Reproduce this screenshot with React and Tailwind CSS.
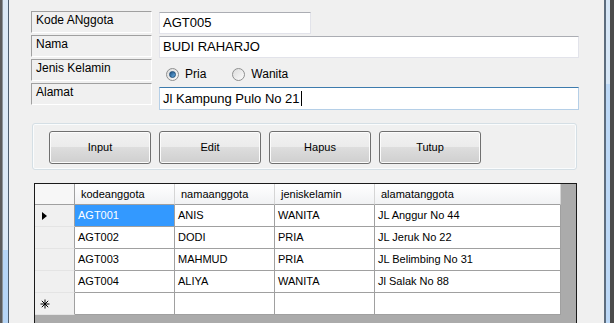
import React from "react";

const ROWS = [
  { kode: "AGT001", nama: "ANIS", jk: "WANITA", alamat: "JL Anggur No 44" },
  { kode: "AGT002", nama: "DODI", jk: "PRIA", alamat: "JL Jeruk No 22" },
  { kode: "AGT003", nama: "MAHMUD", jk: "PRIA", alamat: "JL Belimbing No 31" },
  { kode: "AGT004", nama: "ALIYA", jk: "WANITA", alamat: "Jl Salak No 88" },
];

const COLS = ["kodeanggota", "namaanggota", "jeniskelamin", "alamatanggota"];

function LabelBox({ children }) {
  return (
    <div className="w-[121px] h-[22px] shrink-0 border-t border-l border-b border-r border-t-[#a0a0a0] border-l-[#a0a0a0] border-b-white border-r-white pl-[4px] pt-[1px] text-[12px] leading-[14px] text-black">
      {children}
    </div>
  );
}

function TextBox({ value, width, focused, caret, className = "" }) {
  return (
    <div
      className={`ml-[7px] h-[22px] ${width} bg-white border flex items-center pl-[3px] text-[13px] text-black ${
        focused
          ? "border-[#b5cfe7] border-t-[#3d7bad]"
          : "border-[#e2e3ea] border-t-[#abadb3]"
      } ${className}`}
    >
      <span className="whitespace-pre">{value}</span>
      {caret && <span className="w-px h-[15px] bg-black ml-[1px]" />}
    </div>
  );
}

function Radio({ checked, label }) {
  return (
    <div className="flex items-center gap-[6px] text-[12px] text-black">
      <span className="w-[13px] h-[13px] rounded-full border border-[#8e8f8f] bg-gradient-to-br from-[#dcdcdc] to-[#fbfbfb] flex items-center justify-center">
        {checked && (
          <span className="w-[7px] h-[7px] rounded-full bg-gradient-to-br from-[#1a4f80] to-[#6bb0e6] border border-[#1e4e79]" />
        )}
      </span>
      <span>{label}</span>
    </div>
  );
}

function WinButton({ children }) {
  return (
    <button className="w-[102px] h-[33px] rounded-[3px] border border-[#707070] bg-[linear-gradient(#f2f2f2_0%,#ebebeb_50%,#dddddd_50%,#cfcfcf_100%)] shadow-[inset_0_0_0_1px_#fcfcfc] text-[11px] text-black">
      {children}
    </button>
  );
}

function Asterisk() {
  return (
    <svg width="10" height="10" viewBox="0 0 10 10" className="text-black">
      <g stroke="currentColor" strokeWidth="1">
        <line x1="5" y1="0.5" x2="5" y2="9.5" />
        <line x1="0.5" y1="5" x2="9.5" y2="5" />
        <line x1="1.8" y1="1.8" x2="8.2" y2="8.2" />
        <line x1="8.2" y1="1.8" x2="1.8" y2="8.2" />
      </g>
    </svg>
  );
}

function DataGrid() {
  const cell = "h-[22px] border-r border-b border-[#a0a0a0] flex items-center pl-[3px] text-[11px] bg-white text-black";
  const rowHead = "h-[22px] border-r border-b border-r-[#a0a0a0] border-b-[#e4e4e4] bg-[#f0f0f0] flex items-center";
  return (
    <div className="shrink-0 ml-[3px] mt-[13px] w-[543px] h-[160px] border border-[#1a1a1a] bg-[#ababab]">
      <div className="grid grid-cols-[40px_100px_100px_100px_186px] w-[526px]">
        <div className="h-[21px] border-r border-b border-r-[#a0a0a0] border-b-[#a0a0a0] bg-[#f7f7f7]" />
        {COLS.map((c) => (
          <div
            key={c}
            className="h-[21px] border-r border-b border-r-[#d5d5d5] border-b-[#a0a0a0] bg-[linear-gradient(#ffffff,#f1f2f4)] flex items-center pl-[6px] text-[11px] text-black"
          >
            {c}
          </div>
        ))}
        {ROWS.map((r, i) => (
          <React.Fragment key={r.kode}>
            <div className={rowHead}>
              {i === 0 && (
                <span className="ml-[7px] w-0 h-0 border-y-[4px] border-y-transparent border-l-[5px] border-l-black" />
              )}
            </div>
            <div className={`${cell} ${i === 0 ? "!bg-[#3399ff] !text-white" : ""}`}>{r.kode}</div>
            <div className={cell}>{r.nama}</div>
            <div className={cell}>{r.jk}</div>
            <div className={cell}>{r.alamat}</div>
          </React.Fragment>
        ))}
        <div className={rowHead}>
          <span className="ml-[5px] flex">
            <Asterisk />
          </span>
        </div>
        <div className={cell} />
        <div className={cell} />
        <div className={cell} />
        <div className={cell} />
      </div>
    </div>
  );
}

export default function App() {
  return (
    <div className="w-[614px] h-[323px] overflow-hidden flex bg-[#f0f0f0] font-['Liberation_Sans',Arial,sans-serif]">
      {/* left window frame */}
      <div className="w-[9px] shrink-0 flex">
        <div className="w-[2px] bg-[#5c5c5c]" />
        <div className="w-[1px] bg-[#8d949b]" />
        <div className="w-[5px] flex flex-col">
          <div className="h-[250px] bg-[#dbe8f5]" />
          <div className="flex-1 bg-[#b6d5f6]" />
        </div>
        <div className="w-[1px] bg-[#4d5d6e]" />
      </div>

      <main className="flex-1 flex flex-col pt-[11px] pl-[22px]">
        <div className="shrink-0 flex flex-col gap-[2px]">
          <div className="flex items-start h-[22px]">
            <LabelBox>Kode ANggota</LabelBox>
            <TextBox value="AGT005" width="w-[152px]" className="mt-[1px] h-[21px]" />
          </div>
          <div className="flex items-start h-[22px]">
            <LabelBox>Nama</LabelBox>
            <TextBox value="BUDI RAHARJO" width="w-[420px]" className="mt-[1px] h-[21px]" />
          </div>
          <div className="flex items-start h-[22px]">
            <LabelBox>Jenis Kelamin</LabelBox>
            <div className="ml-[14px] mt-[6px] flex items-center gap-[26px]">
              <Radio checked label="Pria" />
              <Radio label="Wanita" />
            </div>
          </div>
          <div className="flex items-start h-[22px]">
            <LabelBox>Alamat</LabelBox>
            <TextBox value="Jl Kampung Pulo No 21" width="w-[420px]" focused caret className="mt-[4px] h-[23px]" />
          </div>
        </div>

        <div className="shrink-0 ml-[1px] mt-[18px] w-[545px] h-[47px] border border-[#d5dfe5] rounded-[3px] pl-[16px] pt-[7px] flex gap-[8px] shadow-[inset_0_0_0_1px_#fafcfd]">
          <WinButton>Input</WinButton>
          <WinButton>Edit</WinButton>
          <WinButton>Hapus</WinButton>
          <WinButton>Tutup</WinButton>
        </div>

        <DataGrid />
      </main>

      {/* right window frame */}
      <div className="w-[10px] shrink-0 flex">
        <div className="w-[2px] bg-[#5d6d7e]" />
        <div className="w-[4px] flex flex-col">
          <div className="h-[84px] bg-[#d6e6f6]" />
          <div className="flex-1 bg-[#bcd8f6]" />
        </div>
        <div className="w-[4px] bg-[#4c4c4c]" />
      </div>
    </div>
  );
}
